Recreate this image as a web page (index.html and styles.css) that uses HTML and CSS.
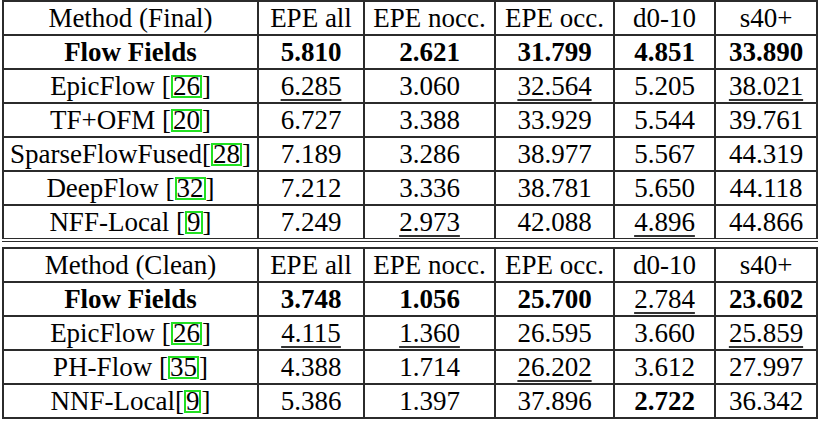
FILE: index.html
```html
<!DOCTYPE html>
<html>
<head>
<meta charset="utf-8">
<link rel="stylesheet" href="styles.css">
</head>
<body>
<div class="page">
<table class="results first">
  <colgroup><col class="c-m"><col class="c-a"><col class="c-n"><col class="c-o"><col class="c-d"><col class="c-s"></colgroup>
  <tr><td>Method (Final)</td><td>EPE all</td><td>EPE nocc.</td><td>EPE occ.</td><td>d0-10</td><td>s40+</td></tr>
  <tr class="best"><td>Flow Fields</td><td>5.810</td><td>2.621</td><td>31.799</td><td>4.851</td><td>33.890</td></tr>
  <tr><td>EpicFlow [<span class="cite">26</span>]</td><td><span class="u">6.285</span></td><td>3.060</td><td><span class="u">32.564</span></td><td>5.205</td><td><span class="u">38.021</span></td></tr>
  <tr><td>TF+OFM [<span class="cite">20</span>]</td><td>6.727</td><td>3.388</td><td>33.929</td><td>5.544</td><td>39.761</td></tr>
  <tr><td>SparseFlowFused[<span class="cite">28</span>]</td><td>7.189</td><td>3.286</td><td>38.977</td><td>5.567</td><td>44.319</td></tr>
  <tr><td>DeepFlow [<span class="cite">32</span>]</td><td>7.212</td><td>3.336</td><td>38.781</td><td>5.650</td><td>44.118</td></tr>
  <tr class="last"><td>NFF-Local [<span class="cite">9</span>]</td><td>7.249</td><td><span class="u">2.973</span></td><td>42.088</td><td><span class="u">4.896</span></td><td>44.866</td></tr>
</table>
<table class="results second">
  <colgroup><col class="c-m"><col class="c-a"><col class="c-n"><col class="c-o"><col class="c-d"><col class="c-s"></colgroup>
  <tr><td>Method (Clean)</td><td>EPE all</td><td>EPE nocc.</td><td>EPE occ.</td><td>d0-10</td><td>s40+</td></tr>
  <tr class="best"><td>Flow Fields</td><td>3.748</td><td>1.056</td><td>25.700</td><td class="norm"><span class="u">2.784</span></td><td>23.602</td></tr>
  <tr><td>EpicFlow [<span class="cite">26</span>]</td><td><span class="u">4.115</span></td><td><span class="u">1.360</span></td><td>26.595</td><td>3.660</td><td><span class="u">25.859</span></td></tr>
  <tr><td>PH-Flow [<span class="cite">35</span>]</td><td>4.388</td><td>1.714</td><td><span class="u">26.202</span></td><td>3.612</td><td>27.997</td></tr>
  <tr><td>NNF-Local[<span class="cite">9</span>]</td><td>5.386</td><td>1.397</td><td>37.896</td><td class="bold">2.722</td><td>36.342</td></tr>
</table>
</div>
</body>
</html>
```

FILE: styles.css
```css
html, body {
  margin: 0;
  padding: 0;
  background: #ffffff;
}

.page {
  padding: 0 0 0 2px;
  display: flex;
  flex-direction: column;
  gap: 5px;
  font-family: "Liberation Serif", "Times New Roman", serif;
  font-size: 27px;
  color: #000;
}

.results {
  border-collapse: collapse;
  table-layout: fixed;
  width: 814px;
}

.results td {
  border: 2px solid #2b2b2b;
  height: 32px;
  padding: 0;
  text-align: center;
  vertical-align: middle;
  white-space: nowrap;
  line-height: 30px;
}

.c-m { width: 255px; }
.c-a { width: 106px; }
.c-n { width: 131px; }
.c-o { width: 119px; }
.c-d { width: 101px; }
.c-s { width: 102px; }

.first .last td {
  border-bottom: 4px double #2b2b2b;
}

.best td {
  font-weight: bold;
}

.best td.norm {
  font-weight: normal;
}

.bold {
  font-weight: bold;
}

.u {
  text-decoration: underline;
  text-decoration-thickness: 2px;
  text-decoration-color: #333;
  text-underline-offset: 4px;
}

.cite {
  display: inline-block;
  border: 2px solid #22e022;
  line-height: 19px;
  padding: 0;
}
```
